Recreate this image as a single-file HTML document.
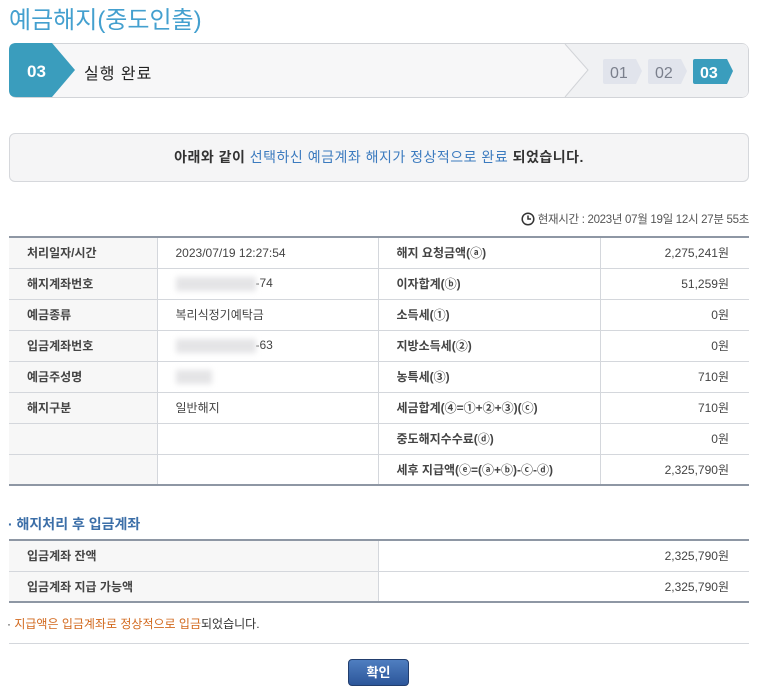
<!DOCTYPE html>
<html><head><meta charset="utf-8"><style>
*{margin:0;padding:0;box-sizing:border-box}
body{width:757px;height:690px;background:#fff;font-family:"Liberation Sans","Noto Sans CJK KR",sans-serif;color:#333;position:relative;overflow:hidden}
.abs{position:absolute}
h1{position:absolute;left:9px;top:0px;font-size:24px;font-weight:normal;color:#44a0cf;letter-spacing:0px}
table{border-collapse:collapse;position:absolute;left:9px;width:740px;font-size:12px}
td{height:31px;border-bottom:1px solid #d4d7dc;padding:0 18px}
td.h{font-weight:bold;color:#444;background:#f7f7f7}
td.v{color:#444}
td.r{text-align:right;padding-right:20px}
td+td{border-left:1px solid #d4d7dc}
.blur{display:inline-block;background:#e4e4e6;filter:blur(3px);height:14px;vertical-align:middle}
</style></head><body>
<h1>예금해지(중도인출)</h1>
<svg class="abs" style="left:0;top:0" width="757" height="110">
<rect x="9.5" y="43.5" width="739" height="54" rx="7" fill="#f7f7f8" stroke="#d2d4d8"/>
<path d="M565 44 L742 44 Q748 44 748 50 L748 91 Q748 97 742 97 L565 97 L588 70 Z" fill="#f0f1f3"/>
<path d="M565 44 L588 70 L565 97" fill="none" stroke="#d2d4d8"/>
<path d="M16 43 L52 43 L75 70 L52 97 L16 97 Q9 97 9 90 L9 50 Q9 43 16 43 Z" fill="#3a9dbd"/>
<text x="27" y="77" font-size="17" font-weight="bold" fill="#fff" font-family="Liberation Sans">03</text>
<path d="M605 59 L636 59 L642 71 L636 84 L605 84 Q603 84 603 82 L603 61 Q603 59 605 59Z" fill="#e1e4ec"/>
<path d="M650 59 L681 59 L687 71 L681 84 L650 84 Q648 84 648 82 L648 61 Q648 59 650 59Z" fill="#e1e4ec"/>
<path d="M695 59 L727 59 L733 71 L727 84 L695 84 Q693 84 693 82 L693 61 Q693 59 695 59Z" fill="#3a9dbd"/>
<text x="610" y="78" font-size="16" fill="#7a7f8c">01</text>
<text x="655" y="78" font-size="16" fill="#7a7f8c">02</text>
<text x="700" y="78" font-size="16" font-weight="bold" fill="#fff">03</text>
</svg>
<div class="abs" style="left:84px;top:60px;font-size:16px;color:#222;letter-spacing:1px">실행 완료</div>
<div class="abs" style="left:9px;top:133px;width:740px;height:49px;border:1px solid #d6d8dc;border-radius:6px;background:#f5f5f6;text-align:center;line-height:47px;font-size:14px;font-weight:bold;color:#333;letter-spacing:0.5px">아래와 같이 <span style="color:#3c7bbf;font-weight:normal">선택하신 예금계좌 해지가 정상적으로 완료</span> 되었습니다.</div>
<div class="abs" style="right:8px;top:211px;font-size:11.5px;color:#555;letter-spacing:-0.3px"><svg width="14" height="14" viewBox="0 0 14 14" style="vertical-align:-3px;margin-right:3px"><circle cx="7" cy="7" r="5.8" fill="none" stroke="#333" stroke-width="1.5"/><path d="M7 3.5 V7 H10" fill="none" stroke="#333" stroke-width="1.5"/></svg>현재시간 : 2023년 07월 19일 12시 27분 55초</div>
<table style="top:236px;border-top:2px solid #8e97a4;border-bottom:2px solid #8e97a4">
<colgroup><col style="width:148px"><col style="width:221px"><col style="width:222px"><col></colgroup>
<tr><td class="h">처리일자/시간</td><td class="v">2023/07/19 12:27:54</td><td class="h" style="background:#fff">해지 요청금액(ⓐ)</td><td class="v r">2,275,241원</td></tr>
<tr><td class="h">해지계좌번호</td><td class="v"><span class="blur" style="width:80px"></span>-74</td><td class="h" style="background:#fff">이자합계(ⓑ)</td><td class="v r">51,259원</td></tr>
<tr><td class="h">예금종류</td><td class="v">복리식정기예탁금</td><td class="h" style="background:#fff">소득세(①)</td><td class="v r">0원</td></tr>
<tr><td class="h">입금계좌번호</td><td class="v"><span class="blur" style="width:80px"></span>-63</td><td class="h" style="background:#fff">지방소득세(②)</td><td class="v r">0원</td></tr>
<tr><td class="h">예금주성명</td><td class="v"><span class="blur" style="width:36px"></span></td><td class="h" style="background:#fff">농특세(③)</td><td class="v r">710원</td></tr>
<tr><td class="h">해지구분</td><td class="v">일반해지</td><td class="h" style="background:#fff">세금합계(④=①+②+③)(ⓒ)</td><td class="v r">710원</td></tr>
<tr><td class="h"></td><td class="v"></td><td class="h" style="background:#fff">중도해지수수료(ⓓ)</td><td class="v r">0원</td></tr>
<tr><td class="h"></td><td class="v"></td><td class="h" style="background:#fff">세후 지급액(ⓔ=(ⓐ+ⓑ)-ⓒ-ⓓ)</td><td class="v r">2,325,790원</td></tr>
</table>
<div class="abs" style="left:8px;top:514px;font-size:14px;font-weight:bold;color:#3c6fa8">· 해지처리 후 입금계좌</div>
<table style="top:539px;border-top:2px solid #8e97a4;border-bottom:2px solid #8e97a4">
<colgroup><col style="width:369px"><col></colgroup>
<tr><td class="h">입금계좌 잔액</td><td class="v r">2,325,790원</td></tr>
<tr><td class="h">입금계좌 지급 가능액</td><td class="v r">2,325,790원</td></tr>
</table>
<div class="abs" style="left:7px;top:615px;font-size:12px;color:#333">· <span style="color:#d2691e">지급액은 입금계좌로 정상적으로 입금</span>되었습니다.</div>
<div class="abs" style="left:9px;top:643px;width:740px;border-top:1px solid #d4d7dc"></div>
<div class="abs" style="left:348px;top:659px;width:61px;height:27px;border:1px solid #223e6e;border-radius:4px;background:linear-gradient(#4f7ec0,#2c569a);color:#fff;font-size:13px;font-weight:bold;text-align:center;line-height:25px">확인</div>
</body></html>
